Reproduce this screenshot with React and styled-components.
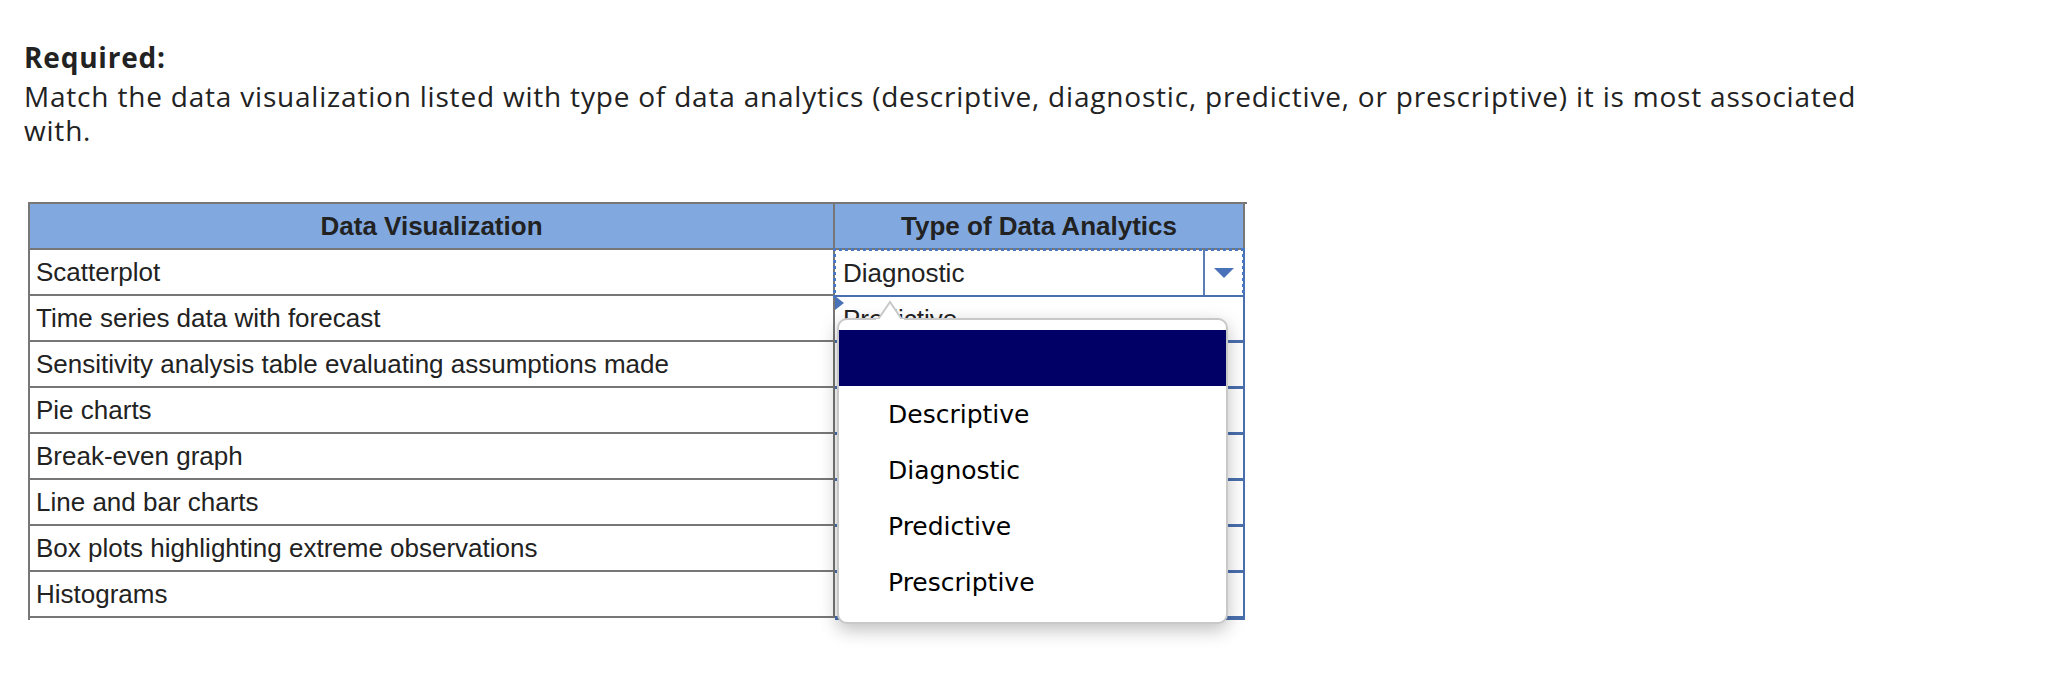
import React from "react";
import styled, { createGlobalStyle } from "styled-components";

const Global = createGlobalStyle`
  html, body {
    margin: 0;
    padding: 0;
    background: #ffffff;
  }
  body {
    font-family: "Liberation Sans", Arial, sans-serif;
    color: #222222;
  }
`;

const Page = styled.div`
  box-sizing: border-box;
  min-height: 680px;
  padding: 40px 0 0 24px;
`;

const Heading = styled.div`
  font-family: "Open Sans", Lato, sans-serif;
  font-weight: 700;
  font-size: 28px;
  line-height: 34px;
  letter-spacing: 0.8px;
  color: #222;
`;

const Prompt = styled.p`
  margin: 5px 0 0;
  width: 1870px;
  font-family: "Open Sans", Lato, sans-serif;
  font-weight: 400;
  font-size: 28px;
  line-height: 34px;
  letter-spacing: 0.8px;
  color: #222;
`;

const Table = styled.div`
  margin: 55px 0 0 4px;
  width: 1217px;
  display: grid;
  grid-template-columns: 805px 410px;
  border-top: 2px solid #777;
  border-left: 2px solid #777;
  font-family: "Liberation Sans", Arial, sans-serif;
  font-size: 26px;
  color: #222;
`;

const HeadCell = styled.div`
  height: 44px;
  display: flex;
  align-items: center;
  justify-content: center;
  background: #81a9df;
  font-weight: 700;
  border-right: 2px solid #777;
  border-bottom: 2px solid #777;
`;

const NameCell = styled.div`
  height: 44px;
  display: flex;
  align-items: center;
  padding-left: 6px;
  border-right: 2px solid #777;
  border-bottom: 2px solid #777;
`;

const ChoiceCell = styled.div`
  position: relative;
  height: 46px;
  border-right: 2px solid #4a6fae;
  border-bottom: ${(p) => (p.$last ? "2px solid #4a6fae" : "none")};
  display: flex;
`;

const SelectBox = styled.div`
  position: relative;
  flex: 1;
  display: flex;
  align-items: center;
  background: #fff;
  border-top: ${(p) => (p.$focused ? "none" : "2px solid #4a6fae")};
  border-bottom: ${(p) => (p.$focused ? "none" : "2px solid #4a6fae")};
  margin-top: ${(p) => (p.$focused ? "0" : "-1px")};
`;

const SelectText = styled.span`
  flex: 1;
  padding-left: 8px;
  line-height: 30px;
  color: #222;
`;

const ArrowZone = styled.span`
  width: 38px;
  align-self: stretch;
  display: flex;
  align-items: center;
  justify-content: center;
  border-left: 2px solid #5a7db8;
`;

/* dotted focus ring drawn over the cell edges */
const FocusRing = styled.span`
  position: absolute;
  left: -2px;
  right: -2px;
  top: -2px;
  bottom: -2px;
  pointer-events: none;
  background:
    repeating-linear-gradient(90deg, #4a78c0 0 3px, transparent 3px 6px) top left / 100% 3px no-repeat,
    repeating-linear-gradient(90deg, #4a78c0 0 3px, transparent 3px 6px) bottom left / 100% 3px no-repeat,
    repeating-linear-gradient(180deg, #4a78c0 0 3px, transparent 3px 6px) top left / 3px 100% no-repeat,
    repeating-linear-gradient(180deg, #4a78c0 0 3px, transparent 3px 6px) top right / 3px 100% no-repeat;
`;

const AnsweredMark = styled.span`
  position: absolute;
  left: 0;
  top: 0;
  width: 0;
  height: 0;
  border-top: 7px solid transparent;
  border-bottom: 7px solid transparent;
  border-left: 9px solid #4a72b8;
  transform: translateY(-1px);
`;

const Popup = styled.div`
  position: absolute;
  left: 2px;
  top: calc(100% + 22px);
  width: 387px;
  padding: 10px 0 12px;
  background: #fff;
  border: 2px solid #c8c8c8;
  border-radius: 10px;
  box-shadow: 0 6px 18px rgba(0, 0, 0, 0.25);
  z-index: 10;
  font-family: "DejaVu Sans", Verdana, sans-serif;
  font-size: 25px;
  color: #000;
`;

const PopupNotch = styled.svg`
  position: absolute;
  left: 37px;
  top: -20px;
`;

const Option = styled.div`
  height: 56px;
  display: flex;
  align-items: center;
  padding-left: 49px;
  background: ${(p) => (p.$active ? "#010066" : "transparent")};
`;

const items = [
  "Scatterplot",
  "Time series data with forecast",
  "Sensitivity analysis table evaluating assumptions made",
  "Pie charts",
  "Break-even graph",
  "Line and bar charts",
  "Box plots highlighting extreme observations",
  "Histograms",
];

const options = ["", "Descriptive", "Diagnostic", "Predictive", "Prescriptive"];

function ArrowDown() {
  return (
    <svg width="20" height="10" viewBox="0 0 20 10">
      <polygon points="0,0 20,0 10,10" fill="#4a72b8" />
    </svg>
  );
}

export default function App() {
  return (
    <>
      <Global />
      <Page>
        <Heading>Required:</Heading>
        <Prompt>
          Match the data visualization listed with type of data analytics (descriptive,
          diagnostic, predictive, or prescriptive) it is most associated with.
        </Prompt>
        <Table>
          <HeadCell>Data Visualization</HeadCell>
          <HeadCell>Type of Data Analytics</HeadCell>
          {items.map((name, i) => (
            <React.Fragment key={name}>
              <NameCell>{name}</NameCell>
              {i === 0 ? (
                <ChoiceCell>
                  <SelectBox $focused>
                    <SelectText>Diagnostic</SelectText>
                    <ArrowZone>
                      <ArrowDown />
                    </ArrowZone>
                    <FocusRing />
                    <Popup>
                      <PopupNotch width="28" height="21" viewBox="0 0 28 21">
                        <polygon points="1,21 14,2 27,21" fill="#fff" stroke="#c8c8c8" strokeWidth="2" />
                        <rect x="0" y="19" width="28" height="3" fill="#fff" />
                      </PopupNotch>
                      {options.map((o, k) => (
                        <Option key={k} $active={k === 0}>
                          {o}
                        </Option>
                      ))}
                    </Popup>
                  </SelectBox>
                </ChoiceCell>
              ) : (
                <ChoiceCell $last={i === items.length - 1}>
                  <SelectBox>
                    {i === 1 && <AnsweredMark />}
                    <SelectText>{i === 1 ? "Predictive" : ""}</SelectText>
                  </SelectBox>
                </ChoiceCell>
              )}
            </React.Fragment>
          ))}
        </Table>
      </Page>
    </>
  );
}
